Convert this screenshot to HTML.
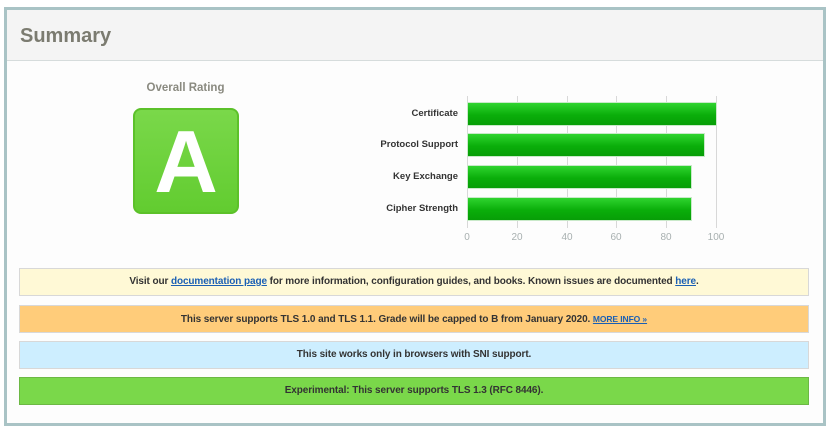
<!DOCTYPE html>
<html><head><meta charset="utf-8"><style>
*{margin:0;padding:0;box-sizing:border-box}
body{width:830px;height:431px;background:#fff;font-family:"Liberation Sans",Arial,sans-serif;position:relative;overflow:hidden}
.frame{position:absolute;left:4px;top:7px;width:822px;height:419px;border:3px solid #a9c3c5;background:#fdfdfd}
.head{position:absolute;left:0;top:0;right:0;height:51px;background:#f4f4f4;border-bottom:1px solid #d6dcdc}
.head span{position:absolute;left:13px;top:15px;font-size:20px;font-weight:bold;color:#7b7b70}
.or{position:absolute;left:126px;top:72px;width:105px;text-align:center;font-size:11.5px;font-weight:bold;color:#8a8a80}
.grade{position:absolute;left:126px;top:98px;width:106px;height:106px;border-radius:8px;background:linear-gradient(#7ad84a,#62cc30);border:2px solid #5cc12a;color:#fff;font-size:88px;font-weight:bold;text-align:center;line-height:104px}
.grid{position:absolute;top:86px;width:1px;height:132px;background:#d8d8d8}
.bar{position:absolute;left:460px;height:24px;background:linear-gradient(#2fd42f,#0aae0a 55%,#079e07);border:1px solid #c9e9c9}
.lbl{position:absolute;right:365px;font-size:9.5px;font-weight:bold;color:#333;text-align:right;white-space:nowrap}
.tick{position:absolute;top:222px;font-size:10px;color:#a8b0b0;width:30px;text-align:center}
.note{position:absolute;left:12px;width:790px;height:28px;border:1px solid #d8d8d8;text-align:center;font-size:10px;font-weight:bold;color:#333;line-height:26px;letter-spacing:-0.1px;white-space:nowrap}
a{color:#1a5fb4;text-decoration:underline}
</style></head><body>
<div class="frame">
<div class="head"><span>Summary</span></div>
<div class="or">Overall Rating</div>
<div class="grade">A</div>
<div class="grid" style="left:460px"></div>
<div class="grid" style="left:510px"></div>
<div class="grid" style="left:560px"></div>
<div class="grid" style="left:609px"></div>
<div class="grid" style="left:659px"></div>
<div class="grid" style="left:709px"></div>
<div class="bar" style="top:92px;width:250px"></div>
<div class="bar" style="top:123px;width:238px"></div>
<div class="bar" style="top:155px;width:225px"></div>
<div class="bar" style="top:187px;width:225px"></div>
<div class="lbl" style="top:98px">Certificate</div>
<div class="lbl" style="top:129px">Protocol Support</div>
<div class="lbl" style="top:161px">Key Exchange</div>
<div class="lbl" style="top:193px">Cipher Strength</div>
<div class="tick" style="left:445px">0</div>
<div class="tick" style="left:495px">20</div>
<div class="tick" style="left:545px">40</div>
<div class="tick" style="left:594px">60</div>
<div class="tick" style="left:644px">80</div>
<div class="tick" style="left:694px">100</div>
<div class="note" style="top:258px;background:#fff9d6">Visit our <a>documentation page</a> for more information, configuration guides, and books. Known issues are documented <a>here</a>.</div>
<div class="note" style="top:295px;background:#ffcc7a">This server supports TLS 1.0 and TLS 1.1. Grade will be capped to B from January 2020. <a style="font-size:8.5px">MORE INFO »</a></div>
<div class="note" style="top:331px;background:#cdeeff">This site works only in browsers with SNI support.</div>
<div class="note" style="top:367px;background:#7ad84a;border-color:#6cb844">Experimental: This server supports TLS 1.3 (RFC 8446).</div>
</div>
</body></html>
